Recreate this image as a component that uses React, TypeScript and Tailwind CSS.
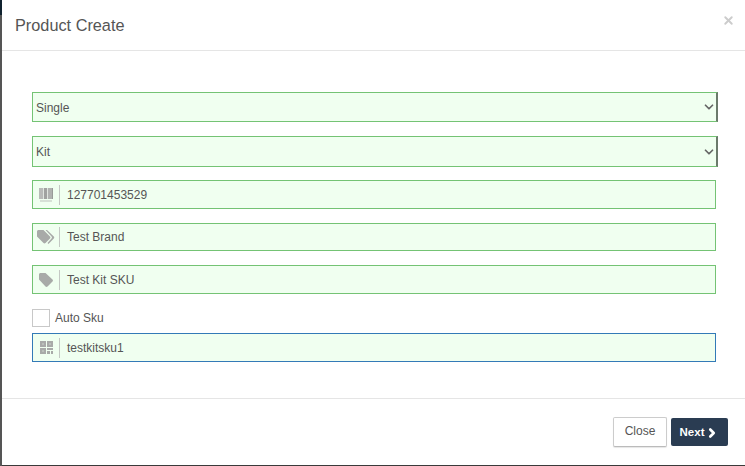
import React from 'react';
import { ChevronDown, ChevronRight, X } from 'lucide-react';

const BarcodeIcon = () => (
  <svg width="14" height="14" viewBox="0 0 14 14" fill="#a8aaa8">
    <rect x="0" y="0" width="4" height="11" fill="#b8bab8" />
    <rect x="4" y="0" width="1" height="11" fill="#dfe5df" />
    <rect x="5" y="0" width="3" height="11" fill="#a0a2a0" />
    <rect x="8" y="0" width="1" height="11" fill="#dfe5df" />
    <rect x="9" y="0" width="4" height="11" fill="#b0b2b0" />
    <rect x="13" y="0" width="1" height="11" fill="#989a98" />
    <rect x="1" y="12.500" width="12" height="1" opacity="0.7" />
  </svg>
);

const TagsIcon = () => (
  <svg width="18" height="15" viewBox="0 0 18 15" fill="#a8aaa8">
    <path d="M0 1.500C0 .7.7 0 1.500 0H6.500L13 6.500C13.600 7.100 13.600 7.900 13 8.500L8.500 13C7.900 13.600 7.100 13.600 6.500 13L0 6.500Z" />
    <path d="M8.500 0H10L16.800 6.500C17.400 7.100 17.400 7.900 16.800 8.500L11.500 14L10.500 13L14.500 8.500C15.100 7.900 15.100 7.100 14.500 6.500Z" />
  </svg>
);

const TagIcon = () => (
  <svg width="14" height="14" viewBox="0 0 14 14" fill="#a8aaa8">
    <path d="M0 1.500C0 .7.7 0 1.500 0H6.500L13.500 6.500C14.100 7.100 14.100 7.900 13.500 8.500L8.500 13.500C7.900 14.100 7.100 14.100 6.500 13.500L0 6.500Z" />
  </svg>
);

const QrIcon = () => (
  <svg width="13" height="13" viewBox="0 0 13 13" fill="#a8aaa8">
    <path fillRule="evenodd" d="M0 0H6V6H0ZM2.500 2.500V3.500H3.500V2.500Z" />
    <path fillRule="evenodd" d="M7 0H13V6H7ZM9.500 2.500V3.500H10.500V2.500Z" />
    <path fillRule="evenodd" d="M0 7H6V13H0ZM2.500 9.500V10.500H3.500V9.500Z" />
    <path d="M7 7H13V9H7ZM7 10H10V13H7ZM11 10H13V13H11Z" />
  </svg>
);

const SelectBox = ({ value, className }: { value: string; className: string }) => (
  <div className={`flex w-[686px] items-center justify-between border border-[#74c374] border-r-[2px] border-r-[#6b7a6b] bg-[#f0fff0] pl-[3px] ${className}`}>
    <span className="pt-[1px] text-[12px] text-[#555555]">{value}</span>
    <ChevronDown size={14} strokeWidth={3} color="#666666" />
  </div>
);

const IconInput = ({
  icon,
  value,
  focused,
  className,
}: {
  icon: React.ReactNode;
  value: string;
  focused?: boolean;
  className: string;
}) => (
  <div className={`flex w-[684px] items-center border bg-[#f0fff0] ${focused ? 'border-[#337ab7]' : 'border-[#74c374]'} ${className}`}>
    <div className="flex h-[20px] w-[27px] shrink-0 items-center justify-center border-r border-[#c4c8c4]">{icon}</div>
    <span className="pl-[7px] text-[12px] text-[#555555]">{value}</span>
  </div>
);

export default function App() {
  return (
    <div className="flex h-[466px] w-[745px] overflow-hidden bg-[#3a3a3a] font-['Liberation_Sans',Arial,sans-serif]">
      <div className="flex h-[466px] w-[2px] shrink-0 flex-col bg-[#555555]">
        <div className="h-[15px] bg-[#10222f]" />
      </div>
      <div className="flex h-[465px] flex-1 flex-col bg-white">
        <div className="flex h-[51px] shrink-0 items-start justify-between border-b border-[#e5e5e5] pl-[13px] pr-[10px]">
          <span className="mt-[15px] text-[16.3px] leading-[20px] text-[#555555]">Product Create</span>
          <X size={13} strokeWidth={3.5} color="#cccccc" className="mt-[14px]" />
        </div>
        <div className="flex h-[347px] shrink-0 flex-col pl-[30px] pt-[41px]">
          <SelectBox value="Single" className="h-[30px]" />
          <SelectBox value="Kit" className="mt-[14px] h-[31px]" />
          <IconInput icon={<BarcodeIcon />} value="127701453529" className="mt-[13px] h-[29px]" />
          <IconInput icon={<TagsIcon />} value="Test Brand" className="mt-[14px] h-[28px]" />
          <IconInput icon={<TagIcon />} value="Test Kit SKU" className="mt-[14px] h-[29px]" />
          <label className="mt-[15px] flex h-[18px] items-center">
            <span className="h-[18px] w-[18px] border border-[#c8c8c8] bg-white" />
            <span className="ml-[5px] text-[12px] text-[#555555]">Auto Sku</span>
          </label>
          <IconInput icon={<QrIcon />} value="testkitsku1" focused className="mt-[6px] h-[29px]" />
        </div>
        <div className="flex flex-1 items-start justify-end gap-[4px] border-t border-[#e5e5e5] pr-[17px] pt-[18px]">
          <button className="h-[30px] w-[54px] rounded-[2px] border border-[#cccccc] border-b-[#bbbbbb] bg-white pb-[2px] text-[12px] text-[#555555] shadow-[0_1px_1px_rgba(0,0,0,0.1)]">
            Close
          </button>
          <button className="mt-[1px] flex h-[28px] w-[57px] items-center justify-center gap-[1px] rounded-[2px] bg-[#2a3c52] pt-[1px] text-[11.5px] font-bold text-white">
            Next
            <ChevronRight size={14} strokeWidth={4.5} color="#ffffff" />
          </button>
        </div>
      </div>
    </div>
  );
}
